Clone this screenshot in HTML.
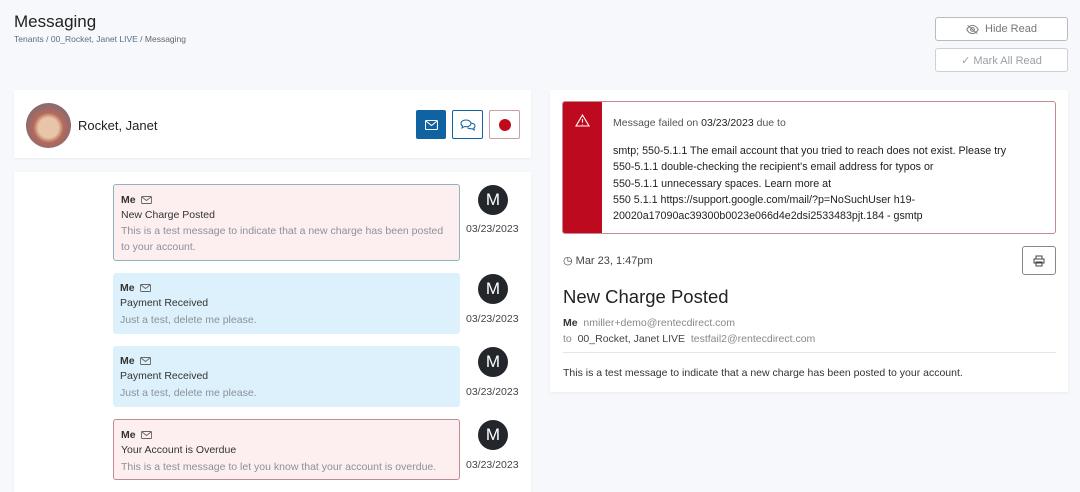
<!DOCTYPE html>
<html><head><meta charset="utf-8"><style>
*{box-sizing:border-box;margin:0;padding:0}
body{width:1080px;height:487px;background:#f6f8fb;font-family:"Liberation Sans",sans-serif;color:#222;position:relative;overflow:hidden}
.a{position:absolute;white-space:nowrap}
.card{position:absolute;background:#fff;box-shadow:0 1px 3px rgba(0,0,0,.06)}
.btn{position:absolute;border:1px solid #b8bcc2;border-radius:3px;background:#fff;color:#9aa0a6;font-size:11px;display:flex;align-items:center;justify-content:center;gap:6px}
.msg{position:absolute;left:113px;width:347px;border-radius:3px;padding:0 7px;font-size:10.5px}
.msg .me{position:absolute;top:9px;left:7px;font-weight:bold;color:#333}
.msg .me svg{margin-left:5px;vertical-align:-1px}
.msg .t{position:absolute;left:7px;color:#333}
.msg .b{position:absolute;left:7px;color:#8a9199;line-height:16px;white-space:normal;width:330px}
.m{position:absolute;left:478px;width:30px;height:30px;border-radius:50%;background:#23272b;color:#fff;font-size:17px;text-align:center;line-height:30px}
.d{position:absolute;left:466px;font-size:10.5px;color:#444}
</style></head><body>
<div class="a" style="left:14px;top:12px;font-size:17px;color:#222">Messaging</div>
<div class="a" style="left:14px;top:34px;font-size:8.5px;color:#5a6f86">Tenants / 00_Rocket, Janet LIVE <span style="color:#666">/ Messaging</span></div>
<div class="btn" style="left:935px;top:17px;width:133px;height:24px;color:#777"><svg width="13" height="11" viewBox="0 0 16 12" fill="none" stroke="#777" stroke-width="1.2"><path d="M1 6C3 2 6 1 8 1s5 1 7 5c-2 4-5 5-7 5S3 10 1 6z"/><circle cx="8" cy="6" r="2.3"/><path d="M2 1l12 10"/></svg>Hide Read</div>
<div class="btn" style="left:935px;top:48px;width:133px;height:24px;border-color:#cdd0d4">✓ Mark All Read</div>

<div class="card" style="left:14px;top:90px;width:517px;height:68px"></div>
<div class="a" style="left:26px;top:103px;width:45px;height:45px;border-radius:50%;background:radial-gradient(circle at 50% 55%,#e8c4a8 0 30%,#b46a5a 45%,#8a6a70 70%,#a89a90 100%)"></div>
<div class="a" style="left:78px;top:118px;font-size:13px;color:#222">Rocket, Janet</div>
<div class="a" style="left:416px;top:110px;width:30px;height:29px;background:#0e63a0;border-radius:2px;display:flex;align-items:center;justify-content:center"><svg width="13" height="10" viewBox="0 0 13 10" fill="none" stroke="#fff" stroke-width="1.1"><rect x=".5" y=".5" width="12" height="9" rx="1"/><path d="M1 1l5.5 4.5L12 1"/></svg></div>
<div class="a" style="left:452px;top:110px;width:31px;height:29px;border:1px solid #0e63a0;border-radius:2px;display:flex;align-items:center;justify-content:center"><svg width="16" height="12" viewBox="0 0 16 12" fill="none" stroke="#0e63a0" stroke-width="1"><path d="M6 1C3 1 1 2.5 1 4.5c0 1 .5 2 1.5 2.5L2 9l2.5-1.5C5 7.7 5.5 7.8 6 7.8c3 0 5-1.5 5-3.3S9 1 6 1z"/><path d="M11.5 4C13.5 4.5 15 5.5 15 7c0 .8-.4 1.6-1.2 2l.4 2-2-1.3c-.4.1-.8.1-1.2.1-1.5 0-2.8-.5-3.5-1.2"/></svg></div>
<div class="a" style="left:489px;top:110px;width:31px;height:29px;border:1px solid #c9a0a6;border-radius:2px"><div style="position:absolute;left:9px;top:8px;width:12px;height:12px;border-radius:50%;background:#c0091d"></div></div>

<div class="card" style="left:14px;top:172px;width:517px;height:320px"></div>
<div class="msg" style="top:184px;height:77px;background:#fdeff0;border:1px solid #8fb3c2"><div class="me">Me<svg width="11" height="8" viewBox="0 0 11 8" fill="none" stroke="#666" stroke-width=".9"><rect x=".5" y=".5" width="10" height="7" rx=".8"/><path d="M1 1l4.5 3.5L10 1"/></svg></div><div class="t" style="top:24px">New Charge Posted</div><div class="b" style="top:38px">This is a test message to indicate that a new charge has been posted to your account.</div></div>
<div class="msg" style="top:273px;height:61px;background:#dcf1fb"><div class="me">Me<svg width="11" height="8" viewBox="0 0 11 8" fill="none" stroke="#666" stroke-width=".9"><rect x=".5" y=".5" width="10" height="7" rx=".8"/><path d="M1 1l4.5 3.5L10 1"/></svg></div><div class="t" style="top:24px">Payment Received</div><div class="b" style="top:39px">Just a test, delete me please.</div></div>
<div class="msg" style="top:346px;height:61px;background:#dcf1fb"><div class="me">Me<svg width="11" height="8" viewBox="0 0 11 8" fill="none" stroke="#666" stroke-width=".9"><rect x=".5" y=".5" width="10" height="7" rx=".8"/><path d="M1 1l4.5 3.5L10 1"/></svg></div><div class="t" style="top:24px">Payment Received</div><div class="b" style="top:39px">Just a test, delete me please.</div></div>
<div class="msg" style="top:419px;height:61px;background:#fdeff0;border:1px solid #c48a92"><div class="me">Me<svg width="11" height="8" viewBox="0 0 11 8" fill="none" stroke="#666" stroke-width=".9"><rect x=".5" y=".5" width="10" height="7" rx=".8"/><path d="M1 1l4.5 3.5L10 1"/></svg></div><div class="t" style="top:24px">Your Account is Overdue</div><div class="b" style="top:39px">This is a test message to let you know that your account is overdue.</div></div>
<div class="m" style="top:185px">M</div><div class="d" style="top:223px">03/23/2023</div>
<div class="m" style="top:274px">M</div><div class="d" style="top:313px">03/23/2023</div>
<div class="m" style="top:347px">M</div><div class="d" style="top:386px">03/23/2023</div>
<div class="m" style="top:420px">M</div><div class="d" style="top:459px">03/23/2023</div>

<div class="card" style="left:550px;top:90px;width:518px;height:302px"></div>
<div class="a" style="left:562px;top:101px;width:494px;height:133px;border:1px solid #c48a92;border-radius:3px;overflow:hidden">
<div style="position:absolute;left:0;top:0;width:39px;height:133px;background:#be0a1e"></div>
<svg style="position:absolute;left:12px;top:12px" width="15" height="13" viewBox="0 0 15 13" fill="none" stroke="#fff" stroke-width="1.1"><path d="M7.5 1L14 12H1z"/><path d="M7.5 5v3.5M7.5 10v.6"/></svg>
<div style="position:absolute;left:50px;top:15px;font-size:10.5px;color:#555">Message failed on <b style="color:#222;font-weight:normal">03/23/2023</b> due to</div>
<div style="position:absolute;left:50px;top:41px;font-size:10.7px;color:#222;line-height:16.3px;white-space:nowrap">smtp; 550-5.1.1 The email account that you tried to reach does not exist. Please try<br>550-5.1.1 double-checking the recipient's email address for typos or<br>550-5.1.1 unnecessary spaces. Learn more at<br>550 5.1.1 https://support.google.com/mail/?p=NoSuchUser h19-<br>20020a17090ac39300b0023e066d4e2dsi2533483pjt.184 - gsmtp</div>
</div>
<div class="a" style="left:563px;top:254px;font-size:11px;color:#444">◷ Mar 23, 1:47pm</div>
<div class="a" style="left:1022px;top:246px;width:34px;height:29px;border:1px solid #888;border-radius:3px;display:flex;align-items:center;justify-content:center"><svg width="12" height="12" viewBox="0 0 12 12" fill="none" stroke="#444" stroke-width="1"><path d="M3 4V1h6v3M1 4h10v4H1zM3 7h6v4H3z"/></svg></div>
<div class="a" style="left:563px;top:286px;font-size:18.5px;color:#222">New Charge Posted</div>
<div class="a" style="left:563px;top:317px;font-size:10.5px;color:#888"><b style="color:#333">Me</b>&nbsp; nmiller+demo@rentecdirect.com</div>
<div class="a" style="left:563px;top:333px;font-size:10.5px;color:#888">to &nbsp;<span style="color:#444">00_Rocket, Janet LIVE</span>&nbsp; testfail2@rentecdirect.com</div>
<div class="a" style="left:563px;top:352px;width:493px;height:1px;background:#e3e5e8"></div>
<div class="a" style="left:563px;top:367px;font-size:10.5px;color:#333">This is a test message to indicate that a new charge has been posted to your account.</div>
</body></html>
